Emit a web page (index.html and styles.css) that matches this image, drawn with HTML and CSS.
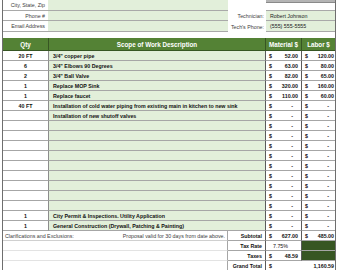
FILE: index.html
```html
<!DOCTYPE html>
<html>
<head>
<meta charset="utf-8">
<link rel="stylesheet" href="styles.css">
</head>
<body>
<div class="sheet">
  <div class="top">
    <div class="top-row r1">
      <div class="lbl">City, State, Zip</div><div class="fld"></div>
      <div class="tlbl"></div><div class="tfld blank"><div class="cap"></div></div>
    </div>
    <div class="top-row r2">
      <div class="lbl">Phone #</div><div class="fld"></div>
      <div class="tlbl">Technician:</div><div class="tfld">Robert Johnson</div>
    </div>
    <div class="top-row r3">
      <div class="lbl">Email Address</div><div class="fld"></div>
      <div class="tlbl">Tech's Phone:</div><div class="tfld">(555) 555-5555</div>
    </div>
    <div class="spacer"></div>
  </div>

  <div class="hdr">
    <div class="h">Qty</div>
    <div class="h">Scope of Work Description</div>
    <div class="h">Material $</div>
    <div class="h last">Labor $</div>
  </div>

  <div class="items">
    <div class="row"><div class="c q">20 FT</div><div class="c s">3/4" copper pipe</div><div class="c m"><span>$</span><span>52.00</span></div><div class="c l"><span>$</span><span>120.00</span></div></div>
    <div class="row"><div class="c q">6</div><div class="c s">3/4" Elbows 90 Degrees</div><div class="c m"><span>$</span><span>63.00</span></div><div class="c l"><span>$</span><span>80.00</span></div></div>
    <div class="row"><div class="c q">2</div><div class="c s">3/4" Ball Valve</div><div class="c m"><span>$</span><span>82.00</span></div><div class="c l"><span>$</span><span>65.00</span></div></div>
    <div class="row"><div class="c q">1</div><div class="c s">Replace MOP Sink</div><div class="c m"><span>$</span><span>320.00</span></div><div class="c l"><span>$</span><span>160.00</span></div></div>
    <div class="row"><div class="c q">1</div><div class="c s">Replace faucet</div><div class="c m"><span>$</span><span>110.00</span></div><div class="c l"><span>$</span><span>60.00</span></div></div>
    <div class="row"><div class="c q">40 FT</div><div class="c s">Installation of cold water piping from existing main in kitchen to new sink</div><div class="c m"><span>$</span><span class="dash">-</span></div><div class="c l"><span>$</span><span class="dash">-</span></div></div>
    <div class="row"><div class="c q"></div><div class="c s">Installation of new shutoff valves</div><div class="c m"><span>$</span><span class="dash">-</span></div><div class="c l"><span>$</span><span class="dash">-</span></div></div>
    <div class="row"><div class="c q"></div><div class="c s"></div><div class="c m"><span>$</span><span class="dash">-</span></div><div class="c l"><span>$</span><span class="dash">-</span></div></div>
    <div class="row"><div class="c q"></div><div class="c s"></div><div class="c m"><span>$</span><span class="dash">-</span></div><div class="c l"><span>$</span><span class="dash">-</span></div></div>
    <div class="row"><div class="c q"></div><div class="c s"></div><div class="c m"><span>$</span><span class="dash">-</span></div><div class="c l"><span>$</span><span class="dash">-</span></div></div>
    <div class="row"><div class="c q"></div><div class="c s"></div><div class="c m"><span>$</span><span class="dash">-</span></div><div class="c l"><span>$</span><span class="dash">-</span></div></div>
    <div class="row"><div class="c q"></div><div class="c s"></div><div class="c m"><span>$</span><span class="dash">-</span></div><div class="c l"><span>$</span><span class="dash">-</span></div></div>
    <div class="row"><div class="c q"></div><div class="c s"></div><div class="c m"><span>$</span><span class="dash">-</span></div><div class="c l"><span>$</span><span class="dash">-</span></div></div>
    <div class="row"><div class="c q"></div><div class="c s"></div><div class="c m"><span>$</span><span class="dash">-</span></div><div class="c l"><span>$</span><span class="dash">-</span></div></div>
    <div class="row"><div class="c q"></div><div class="c s"></div><div class="c m"><span>$</span><span class="dash">-</span></div><div class="c l"><span>$</span><span class="dash">-</span></div></div>
    <div class="row"><div class="c q"></div><div class="c s"></div><div class="c m"><span>$</span><span class="dash">-</span></div><div class="c l"><span>$</span><span class="dash">-</span></div></div>
    <div class="row"><div class="c q">1</div><div class="c s">City Permit &amp; Inspections. Utility Application</div><div class="c m"><span>$</span><span class="dash">-</span></div><div class="c l"><span>$</span><span class="dash">-</span></div></div>
    <div class="row"><div class="c q">1</div><div class="c s">General Construction (Drywall, Patching &amp; Painting)</div><div class="c m"><span>$</span><span class="dash">-</span></div><div class="c l"><span>$</span><span class="dash">-</span></div></div>
  </div>

  <div class="totals">
    <div class="trow">
      <div class="tl first"><span>Clarifications and Exclusions:</span><span>Proposal valid for 30 days from date above.</span></div>
      <div class="tk">Subtotal</div>
      <div class="c m"><span>$</span><span>627.00</span></div>
      <div class="c l"><span>$</span><span>485.00</span></div>
    </div>
    <div class="trow">
      <div class="tl"></div>
      <div class="tk">Tax Rate</div>
      <div class="c m pct">7.75%</div>
      <div class="c l dk"></div>
    </div>
    <div class="trow">
      <div class="tl"></div>
      <div class="tk">Taxes</div>
      <div class="c m"><span>$</span><span>48.59</span></div>
      <div class="c l dk"></div>
    </div>
    <div class="trow">
      <div class="tl"></div>
      <div class="tk">Grand Total</div>
      <div class="c l grand"><span>$</span><span>1,160.59</span></div>
    </div>
  </div>
</div>
</body>
</html>
```

FILE: styles.css
```css
* { box-sizing: border-box; }
body {
  margin: 0;
  background: #ffffff;
  font-family: "Liberation Sans", Arial, sans-serif;
}
.sheet {
  margin-left: 2px;
  width: 334px;
  border-left: 1px solid #6e6e6e;
  border-right: 1px solid #6e6e6e;
}
.top-row {
  display: grid;
  grid-template-columns: 45px 180px 38px 69px;
  font-size: 5.3px;
  color: #404040;
}
.r1 { height: 11px; }
.r2 { height: 10px; }
.r3 { height: 11px; }
.lbl {
  display: flex;
  align-items: center;
  justify-content: flex-end;
  padding-right: 3px;
  border-bottom: 1px solid #a9a9a9;
  white-space: nowrap;
}
.fld {
  background: #e2efda;
  border-bottom: 1px solid #a9a9a9;
}
.tlbl {
  display: flex;
  align-items: center;
  justify-content: flex-end;
  padding-right: 2px;
  white-space: nowrap;
}
.tfld {
  display: flex;
  align-items: center;
  padding-left: 4px;
  background: #e2efda;
  border-bottom: 1px solid #a9a9a9;
  color: #1a1a1a;
  white-space: nowrap;
}
.tfld.blank {
  background: #ffffff;
  padding: 0;
  align-items: flex-start;
}
.cap {
  width: 100%;
  height: 3px;
  background: #b4b4b4;
  border-bottom: 1px solid #8a8a8a;
}
.spacer { height: 6px; }

.hdr {
  display: grid;
  grid-template-columns: 46px 217px 36px 33px;
  height: 13px;
  background: #548235;
  border-bottom: 1px solid #375623;
}
.h {
  display: flex;
  align-items: center;
  justify-content: center;
  color: #ffffff;
  font-weight: bold;
  font-size: 6.3px;
  border-right: 1px solid #375623;
  white-space: nowrap;
}
.h.last { border-right: none; }

.row {
  display: grid;
  grid-template-columns: 46px 217px 36px 33px;
  height: 10px;
}
.c {
  display: flex;
  align-items: center;
  font-size: 5.3px;
  font-weight: bold;
  color: #111111;
  border-bottom: 1px solid #a6a6a6;
  white-space: nowrap;
}
.q {
  justify-content: center;
  border-right: 1px solid #8c8c8c;
}
.s {
  background: #e2efda;
  padding-left: 4px;
  border-right: 1px solid #5a5a5a;
  overflow: hidden;
}
.m {
  justify-content: space-between;
  padding: 0 3px;
  border-right: 1px solid #5a5a5a;
}
.l {
  justify-content: space-between;
  padding: 0 1px 0 3px;
}
.dash { padding-right: 5px; }

.trow {
  display: grid;
  grid-template-columns: 225px 38px 36px 33px;
  height: 10px;
}
.tl {
  display: flex;
  align-items: center;
  justify-content: space-between;
  padding: 0 2px 0 2px;
  font-size: 5.3px;
  color: #404040;
  border-right: 1px solid #a6a6a6;
  border-bottom: 1px solid #e3e3e3;
  white-space: nowrap;
}
.tl.first { border-bottom: 1px solid #d0d0d0; }
.tk {
  display: flex;
  align-items: center;
  justify-content: flex-end;
  padding-right: 3px;
  font-size: 5.3px;
  font-weight: bold;
  color: #111111;
  border-right: 1px solid #5a5a5a;
  border-bottom: 1px solid #a6a6a6;
  white-space: nowrap;
}
.pct {
  justify-content: flex-end;
  padding-right: 13px;
  font-weight: normal;
}
.dk {
  background: #375623;
}
.grand {
  grid-column: span 2;
}
```
